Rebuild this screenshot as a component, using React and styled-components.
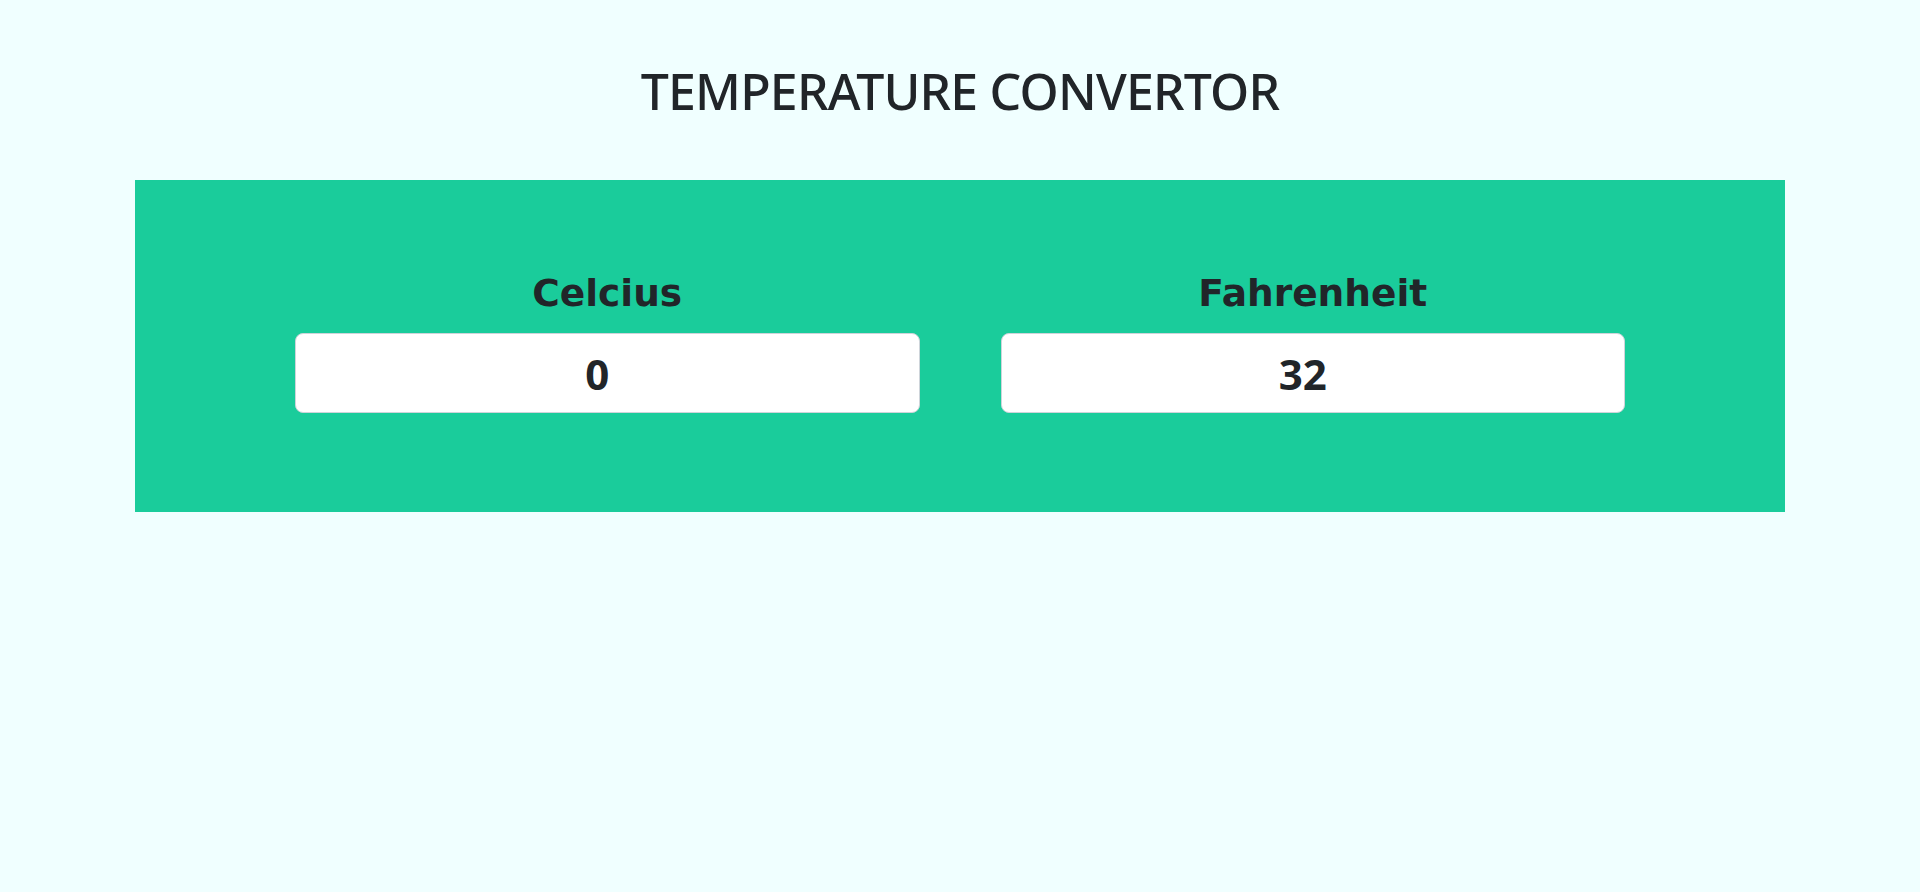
import React, { useState } from "react";
import styled, { createGlobalStyle } from "styled-components";

const GlobalStyle = createGlobalStyle`
  html, body {
    margin: 0;
    padding: 0;
    background-color: #f0ffff;
    color: #212529;
    font-family: "Open Sans", "Noto Sans", sans-serif;
  }
`;

const Page = styled.div`
  min-height: 892px;
  box-sizing: border-box;
  padding-top: 55px;
`;

const Title = styled.h1`
  margin: 0 0 53px;
  text-align: center;
  font-family: "Noto Sans", "Open Sans", sans-serif;
  font-weight: 500;
  font-size: 50px;
  line-height: 72px;
  letter-spacing: -0.8px;
  color: #212529;
`;

const Panel = styled.div`
  width: 1650px;
  margin: 0 auto;
  background-color: #1acc9b;
  padding: 90px 160px 99px;
  box-sizing: border-box;
  display: grid;
  grid-template-columns: 1fr 1fr;
  column-gap: 81px;
`;

const Field = styled.div`
  display: flex;
  flex-direction: column;
  align-items: stretch;
`;

const Label = styled.label`
  display: block;
  text-align: center;
  font-family: "DejaVu Sans", Verdana, sans-serif;
  font-weight: 700;
  font-size: 37.5px;
  line-height: 46px;
  margin-bottom: 17px;
  color: #212529;
`;

const Input = styled.input`
  box-sizing: border-box;
  width: 100%;
  height: 80px;
  border: 1px solid #ced4da;
  border-radius: 8px;
  background: #fff;
  text-align: center;
  font-family: "Open Sans", "Noto Sans", sans-serif;
  font-weight: 700;
  font-size: 42px;
  color: #212529;
  outline: none;
  padding: 0 36px 0 16px;
  -moz-appearance: textfield;
  &::-webkit-inner-spin-button,
  &::-webkit-outer-spin-button {
    -webkit-appearance: none;
    margin: 0;
  }
`;

export default function App() {
  const [celcius, setCelcius] = useState("0");
  const [fahrenheit, setFahrenheit] = useState("32");

  const onCelcius = (e) => {
    const v = e.target.value;
    setCelcius(v);
    const n = parseFloat(v);
    setFahrenheit(isNaN(n) ? "" : String(Math.round((n * 9) / 5 + 32)));
  };

  const onFahrenheit = (e) => {
    const v = e.target.value;
    setFahrenheit(v);
    const n = parseFloat(v);
    setCelcius(isNaN(n) ? "" : String(Math.round(((n - 32) * 5) / 9)));
  };

  return (
    <Page>
      <GlobalStyle />
      <Title>TEMPERATURE CONVERTOR</Title>
      <Panel>
        <Field>
          <Label>Celcius</Label>
          <Input type="number" value={celcius} onChange={onCelcius} />
        </Field>
        <Field>
          <Label>Fahrenheit</Label>
          <Input type="number" value={fahrenheit} onChange={onFahrenheit} />
        </Field>
      </Panel>
    </Page>
  );
}
